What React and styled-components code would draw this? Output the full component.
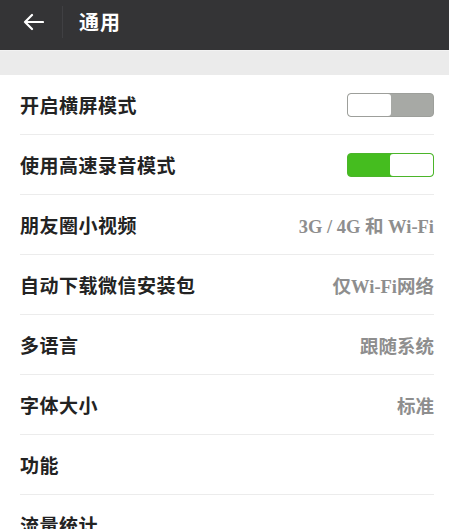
import React from "react";
import styled, { createGlobalStyle } from "styled-components";

const GlobalStyle = createGlobalStyle`
  html, body {
    margin: 0;
    padding: 0;
    background: #fff;
  }
  body {
    font-family: "Noto Sans CJK SC", "Noto Sans", sans-serif;
  }
`;

const Page = styled.div`
  width: 449px;
  height: 529px;
  overflow: hidden;
  background: #fff;
`;

const Header = styled.div`
  display: flex;
  align-items: center;
  height: 50px;
  padding-left: 22px;
  box-sizing: border-box;
  background: #343436;
  padding-bottom: 6px;
`;

const BackButton = styled.div`
  display: flex;
  align-items: center;
  width: 22px;
  height: 20px;
`;

const HeaderDivider = styled.div`
  width: 1px;
  height: 32px;
  margin: 0 16px 0 18px;
  background: #404043;
`;

const Title = styled.h1`
  margin: 0;
  font-size: 20px;
  font-weight: 700;
  color: #fff;
  letter-spacing: 1px;
  line-height: 1;
`;

const Band = styled.div`
  height: 25px;
  background: #ebebeb;
  border-top: 1px solid #f2f2f2;
  box-sizing: border-box;
`;

const List = styled.div`
  display: flex;
  flex-direction: column;
  padding: 0 15px 0 20px;
`;

const Row = styled.div`
  display: flex;
  align-items: center;
  justify-content: space-between;
  height: 59px;
  border-bottom: 1px solid #ececec;
  flex-shrink: 0;
`;

const Label = styled.span`
  font-size: 19px;
  font-weight: 700;
  color: #232323;
  letter-spacing: 0.5px;
`;

const Value = styled.span`
  font-family: "Liberation Serif", "Noto Sans CJK SC", serif;
  font-size: 18.5px;
  font-weight: 700;
  color: #8e8e8e;
`;

const Toggle = styled.div`
  display: flex;
  width: 87px;
  height: 24px;
  box-sizing: border-box;
  border-radius: 4px;
  overflow: hidden;
  border: 1px solid ${props => (props.on ? "#4bb52a" : "#9d9f9b")};
  background: ${props => (props.on ? "#45bd1f" : "#a7a9a5")};
  justify-content: ${props => (props.on ? "flex-end" : "flex-start")};
`;

const Knob = styled.div`
  width: 43px;
  height: 100%;
  background: #fff;
  border-radius: 3px;
`;

const ArrowIcon = () => (
  <svg width="22" height="18" viewBox="0 0 22 18" fill="none">
    <path
      d="M21 9H3M10 2L3 9l7 7"
      stroke="#fff"
      strokeWidth="2.2"
      strokeLinecap="round"
      strokeLinejoin="round"
    />
  </svg>
);

const items = [
  { label: "开启横屏模式", toggle: false },
  { label: "使用高速录音模式", toggle: true },
  { label: "朋友圈小视频", value: "3G / 4G 和 Wi-Fi" },
  { label: "自动下载微信安装包", value: "仅Wi-Fi网络" },
  { label: "多语言", value: "跟随系统" },
  { label: "字体大小", value: "标准" },
  { label: "功能" },
  { label: "流量统计" }
];

export default function App() {
  return (
    <Page>
      <GlobalStyle />
      <Header>
        <BackButton>
          <ArrowIcon />
        </BackButton>
        <HeaderDivider />
        <Title>通用</Title>
      </Header>
      <Band />
      <List>
        {items.map(item => (
          <Row key={item.label}>
            <Label>{item.label}</Label>
            {item.toggle !== undefined && (
              <Toggle on={item.toggle}>
                <Knob />
              </Toggle>
            )}
            {item.value && <Value>{item.value}</Value>}
          </Row>
        ))}
      </List>
    </Page>
  );
}
